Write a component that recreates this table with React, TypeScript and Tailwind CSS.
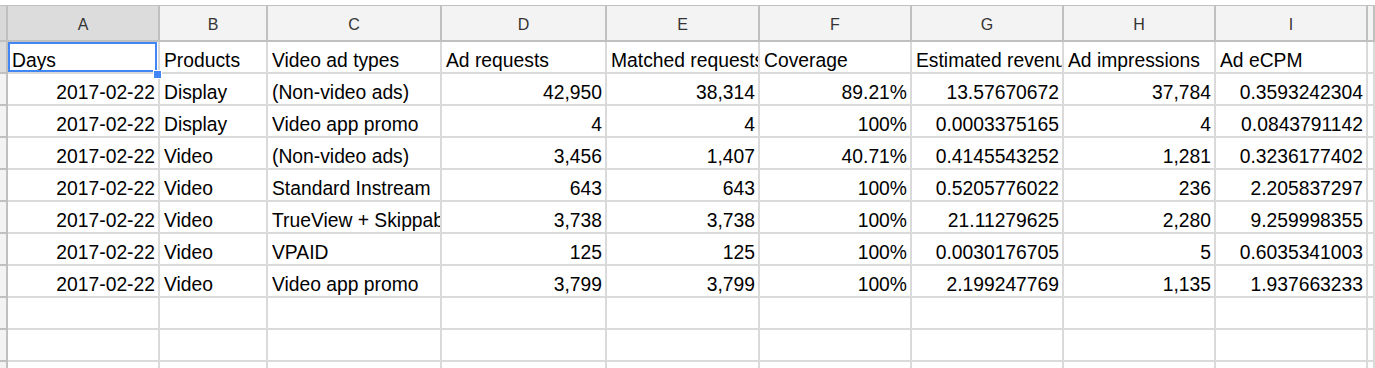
const letters = ["A", "B", "C", "D", "E", "F", "G", "H", "I", ""]

const headers = [
  "Days",
  "Products",
  "Video ad types",
  "Ad requests",
  "Matched requests",
  "Coverage",
  "Estimated revenue",
  "Ad impressions",
  "Ad eCPM",
]

const rows = [
  ["2017-02-22", "Display", "(Non-video ads)", "42,950", "38,314", "89.21%", "13.57670672", "37,784", "0.3593242304"],
  ["2017-02-22", "Display", "Video app promo", "4", "4", "100%", "0.0003375165", "4", "0.0843791142"],
  ["2017-02-22", "Video", "(Non-video ads)", "3,456", "1,407", "40.71%", "0.4145543252", "1,281", "0.3236177402"],
  ["2017-02-22", "Video", "Standard Instream", "643", "643", "100%", "0.5205776022", "236", "2.205837297"],
  ["2017-02-22", "Video", "TrueView + Skippable", "3,738", "3,738", "100%", "21.11279625", "2,280", "9.259998355"],
  ["2017-02-22", "Video", "VPAID", "125", "125", "100%", "0.0030176705", "5", "0.6035341003"],
  ["2017-02-22", "Video", "Video app promo", "3,799", "3,799", "100%", "2.199247769", "1,135", "1.937663233"],
]

// columns B and C hold text, everything else is right aligned
const leftCols = [1, 2]

function Cell({ text, right, selected }: { text?: string; right?: boolean; selected?: boolean }) {
  return (
    <div
      className={
        right
          ? "relative flex h-[32px] items-end justify-end overflow-hidden whitespace-nowrap border-r-2 border-b-2 border-[#dadada] pr-[3px] pb-0 leading-[22px]"
          : "relative flex h-[32px] items-end justify-start overflow-hidden whitespace-nowrap border-r-2 border-b-2 border-[#dadada] pl-[4px] pb-0 leading-[22px]"
      }
    >
      {text}
      {selected && <div className="absolute inset-0 right-[1px] border-2 border-[#4285f4]" />}
    </div>
  )
}

export default function App() {
  const emptyRows = 3

  return (
    <div className="h-[368px] w-[1375px] overflow-hidden bg-white font-['Liberation_Sans',Arial,sans-serif] text-[19.3px] text-black">
      <div className="h-[5px]" />
      <div className="relative grid grid-cols-[8px_152px_108px_174px_165px_153px_152px_152px_152px_152px_1fr]">
        {/* column letters */}
        <div className="h-[37px] border-t border-r-2 border-b-2 border-[#c0c0c0] bg-[#d9d9d9]" />
        {letters.map((l, i) => (
          <div
            key={"h" + i}
            className={
              i === 0
                ? "flex h-[37px] items-center justify-center border-t border-r-2 border-b-2 border-[#c0c0c0] bg-[#dcdcdc] pt-[3px] text-[16px] text-[#333]"
                : "flex h-[37px] items-center justify-center border-t border-r-2 border-b-2 border-[#c0c0c0] bg-[#f3f3f3] pt-[3px] text-[16px] text-[#333]"
            }
          >
            {l}
          </div>
        ))}

        {/* title row */}
        <div className="h-[32px] border-r-2 border-b-2 border-[#c0c0c0] bg-[#dcdcdc]" />
        {headers.map((h, i) => (
          <Cell key={"t" + i} text={h} selected={i === 0} />
        ))}
        <Cell />

        {rows.map((r, ri) => (
          <div key={"r" + ri} className="contents">
            <div className="h-[32px] border-r-2 border-b-2 border-[#c0c0c0] bg-[#f3f3f3]" />
            {r.map((v, ci) => (
              <Cell key={ci} text={v} right={!leftCols.includes(ci)} />
            ))}
            <Cell />
          </div>
        ))}

        {Array.from({ length: emptyRows }).map((_, ri) => (
          <div key={"e" + ri} className="contents">
            <div className="h-[32px] border-r-2 border-b-2 border-[#c0c0c0] bg-[#f3f3f3]" />
            {letters.map((_, ci) => (
              <Cell key={ci} />
            ))}
          </div>
        ))}

        {/* fill handle of the selected cell */}
        <div className="absolute top-[65px] left-[153px] h-[9px] w-[9px] border border-white bg-[#4285f4]" />
      </div>
    </div>
  )
}
